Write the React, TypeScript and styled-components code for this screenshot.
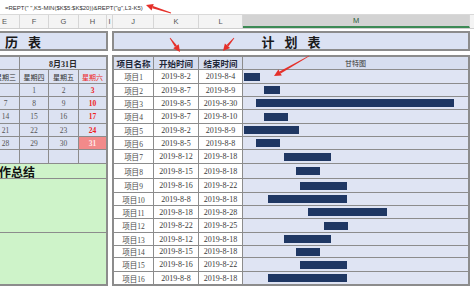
import React from "react";
import styled, { createGlobalStyle } from "styled-components";

const GlobalStyle = createGlobalStyle`
  html, body { margin: 0; padding: 0; background: #ffffff; }
  body { overflow: hidden; font-family: "Liberation Serif", "Noto Sans CJK SC", serif; }
`;

const LINE = "#8c8c8c";
const BLUE = "#dce2f2";
const GANTT = "#dfe4f3";
const HEAD = "#d7deef";
const GREEN = "#cef3c9";
const RED = "#ee1f1f";
const NAVY = "#1f3763";

const COLS = [
  { name: "E", w: 30 },
  { name: "F", w: 29 },
  { name: "G", w: 30 },
  { name: "H", w: 28 },
  { name: "I", w: 6 },
  { name: "J", w: 41 },
  { name: "K", w: 45 },
  { name: "L", w: 44 },
  { name: "M", w: 227 },
  { name: "N", w: 40 },
];

const ROWS = [14, 13, 13, 14, 13, 13, 14, 15, 14, 13, 13, 14, 13, 12, 14, 12];

const PROJECTS: [number, number][] = [
  [2, 4], [7, 9], [5, 30], [7, 10], [2, 9], [5, 8], [12, 18], [15, 18],
  [16, 22], [8, 18], [18, 28], [22, 25], [12, 18], [15, 18], [16, 22], [8, 18],
];

const WEEKS: string[][] = [
  ["", "1", "2", "3"],
  ["7", "8", "9", "10"],
  ["14", "15", "16", "17"],
  ["21", "22", "23", "24"],
  ["28", "29", "30", "31"],
  ["", "", "", ""],
];

const Page = styled.div`
  position: relative;
  width: 474px;
  height: 290px;
  overflow: hidden;
  background: #fff;
`;

const FormulaBar = styled.div`
  height: 15px;
  box-sizing: border-box;
  border-bottom: 1px solid #d9d9d9;
  display: flex;
  align-items: center;
  padding: 2px 0 0 5px;
  font-family: "Liberation Sans", Arial, sans-serif;
  font-size: 6px;
  color: #333;
  white-space: pre;
`;

const ColHeaderRow = styled.div`
  display: grid;
  grid-template-columns: ${COLS.map((c) => c.w + "px").join(" ")};
  height: 14px;
  margin-left: -10px;
  box-sizing: border-box;
  background: #f4f4f4;
  border-bottom: 1px solid #cfcfcf;
`;

const ColLetter = styled.div<{ $active?: boolean }>`
  display: flex;
  align-items: center;
  justify-content: center;
  box-sizing: border-box;
  border-right: 1px solid #d6d6d6;
  font-family: "Liberation Sans", Arial, sans-serif;
  font-size: 7.5px;
  color: ${(p) => (p.$active ? "#2c5d38" : "#555")};
  background: ${(p) => (p.$active ? "#d3d3d3" : "transparent")};
  border-bottom: ${(p) => (p.$active ? "2px solid #3d8a55" : "none")};
`;

const Body = styled.div`
  display: flex;
  align-items: flex-start;
  gap: 4px;
  margin-left: -10px;
  padding-top: 2px;
`;

const Panel = styled.section<{ $w: number }>`
  width: ${(p) => p.$w}px;
  display: flex;
  flex-direction: column;
  gap: 4px;
`;

const TitleBox = styled.div<{ $center?: boolean }>`
  height: 20px;
  box-sizing: border-box;
  border: 2px solid ${LINE};
  background: #dbe2f3;
  display: flex;
  align-items: center;
  justify-content: ${(p) => (p.$center ? "center" : "flex-start")};
  padding-left: ${(p) => (p.$center ? 0 : 13)}px;
  padding-top: 1px;
  gap: 10px;
`;

const TitleChar = styled.span`
  font-family: "Noto Sans CJK SC", sans-serif;
  font-weight: 700;
  font-size: 13px;
  line-height: 1;
  color: #1a1a1a;
`;

const Table = styled.div`
  border: 2px solid ${LINE};
  display: flex;
  flex-direction: column;
  background: #fff;
`;

const Row = styled.div<{ $h: number; $cols: string }>`
  display: grid;
  grid-template-columns: ${(p) => p.$cols};
  height: ${(p) => p.$h}px;
  box-sizing: border-box;
  border-bottom: 1px solid ${LINE};
  &:last-child {
    border-bottom: none;
  }
`;

const Cell = styled.div<{ $bg?: string }>`
  display: flex;
  align-items: center;
  justify-content: center;
  box-sizing: border-box;
  border-right: 1px solid ${LINE};
  overflow: hidden;
  white-space: nowrap;
  background: ${(p) => p.$bg ?? "#fff"};
  &:last-child {
    border-right: none;
  }
`;

const MonthCell = styled(Cell)`
  grid-column: 2 / -1;
  font-family: "Liberation Serif", "Noto Sans CJK SC", serif;
  font-weight: 700;
  font-size: 8px;
  color: #2a2a2a;
`;

const WeekdayCell = styled(Cell)<{ $sat?: boolean }>`
  font-family: "Noto Sans CJK SC", sans-serif;
  font-size: 7px;
  color: ${(p) => (p.$sat ? RED : "#333")};
`;

const DayCell = styled(Cell)<{ $sat?: boolean; $today?: boolean }>`
  font-family: "Liberation Serif", serif;
  font-size: 7.5px;
  font-weight: ${(p) => (p.$sat ? 700 : 400)};
  color: ${(p) => (p.$today ? "#ffe9e9" : p.$sat ? RED : "#555")};
`;

const NoteTitle = styled(Cell)`
  grid-column: 1 / -1;
  justify-content: flex-start;
  padding-left: 7px;
  font-family: "Noto Sans CJK SC", sans-serif;
  font-weight: 700;
  font-size: 12px;
  color: #111;
`;

const NoteBlock = styled(Cell)`
  grid-column: 1 / -1;
`;

const ProjHead = styled(Cell)`
  font-family: "Noto Sans CJK SC", sans-serif;
  font-weight: 700;
  font-size: 8.5px;
  color: #1f2738;
`;

const GanttHead = styled(Cell)`
  font-family: "Noto Sans CJK SC", sans-serif;
  font-size: 7px;
  color: #333;
`;

const NameCell = styled(Cell)`
  font-family: "Liberation Serif", "Noto Sans CJK SC", serif;
  font-size: 7.5px;
  color: #4a4a4a;
`;

const DateCell = styled(Cell)`
  font-family: "Liberation Serif", serif;
  font-size: 8px;
  color: #3a3a3a;
`;

const GanttCell = styled(Cell)`
  justify-content: flex-start;
  background: ${GANTT};
`;

const Bar = styled.div`
  height: 8px;
  background: ${NAVY};
  flex: none;
`;

const Overlay = styled.svg`
  position: absolute;
  left: 0;
  top: 0;
  pointer-events: none;
`;

function Arrow({ x1, y1, x2, y2 }: { x1: number; y1: number; x2: number; y2: number }) {
  const dx = x2 - x1;
  const dy = y2 - y1;
  const len = Math.hypot(dx, dy);
  const ux = dx / len;
  const uy = dy / len;
  const nx = -uy;
  const ny = ux;
  const hl = 7;
  const hw = 3.4;
  const bx = x2 - ux * hl;
  const by = y2 - uy * hl;
  const tw = 0.4;
  const sw = 1.2;
  const shaft = [
    [x1 + nx * tw, y1 + ny * tw],
    [bx + nx * sw, by + ny * sw],
    [bx - nx * sw, by - ny * sw],
    [x1 - nx * tw, y1 - ny * tw],
  ];
  const head = [
    [x2, y2],
    [bx + nx * hw, by + ny * hw],
    [bx - nx * hw, by - ny * hw],
  ];
  const pts = (a: number[][]) => a.map((p) => p.map((v) => v.toFixed(1)).join(",")).join(" ");
  return (
    <g fill="#e5302a">
      <polygon points={pts(shaft)} />
      <polygon points={pts(head)} />
    </g>
  );
}

const LEFT_COLS = "28px 29px 30px 1fr";
const RIGHT_COLS = "40px 45px 44px 1fr";

export default function App() {
  const blockA = ROWS.slice(8, 12).reduce((a, b) => a + b, 0);
  const blockB = ROWS.slice(12, 16).reduce((a, b) => a + b, 0);
  return (
    <Page>
      <GlobalStyle />
      <FormulaBar>{'=REPT(" ",K5-MIN($K$5:$K$20))&REPT("g",L3-K5)'}</FormulaBar>
      <ColHeaderRow>
        {COLS.map((c) => (
          <ColLetter key={c.name} $active={c.name === "M"}>
            {c.name === "N" ? "" : c.name}
          </ColLetter>
        ))}
      </ColHeaderRow>
      <Body>
        <Panel $w={118}>
          <TitleBox>
            <TitleChar>历</TitleChar>
            <TitleChar>表</TitleChar>
          </TitleBox>
          <Table>
            <Row $h={13} $cols={LEFT_COLS}>
              <Cell $bg={BLUE} />
              <MonthCell $bg={BLUE}>8月31日</MonthCell>
            </Row>
            <Row $h={ROWS[0]} $cols={LEFT_COLS}>
              {["星期三", "星期四", "星期五", "星期六"].map((d, i) => (
                <WeekdayCell key={d} $bg={BLUE} $sat={i === 3}>
                  {d}
                </WeekdayCell>
              ))}
            </Row>
            {WEEKS.map((week, wi) => (
              <Row key={wi} $h={ROWS[wi + 1]} $cols={LEFT_COLS}>
                {week.map((d, i) => (
                  <DayCell
                    key={i}
                    $bg={d === "31" ? "#f28a8a" : BLUE}
                    $sat={i === 3}
                    $today={d === "31"}
                  >
                    {d}
                  </DayCell>
                ))}
              </Row>
            ))}
            <Row $h={ROWS[7]} $cols={LEFT_COLS}>
              <NoteTitle $bg={GREEN}>作总结</NoteTitle>
            </Row>
            <Row $h={blockA} $cols={LEFT_COLS}>
              <NoteBlock $bg={GREEN} />
            </Row>
            <Row $h={blockB} $cols={LEFT_COLS}>
              <NoteBlock $bg={GREEN} />
            </Row>
          </Table>
        </Panel>
        <Panel $w={358}>
          <TitleBox $center>
            <TitleChar>计</TitleChar>
            <TitleChar>划</TitleChar>
            <TitleChar>表</TitleChar>
          </TitleBox>
          <Table>
            <Row $h={13} $cols={RIGHT_COLS}>
              <ProjHead $bg={HEAD}>项目名称</ProjHead>
              <ProjHead $bg={HEAD}>开始时间</ProjHead>
              <ProjHead $bg={HEAD}>结束时间</ProjHead>
              <GanttHead $bg={HEAD}>甘特图</GanttHead>
            </Row>
            {PROJECTS.map(([s, e], i) => (
              <Row key={i} $h={ROWS[i]} $cols={RIGHT_COLS}>
                <NameCell>项目{i + 1}</NameCell>
                <DateCell>2019-8-{s}</DateCell>
                <DateCell>2019-8-{e}</DateCell>
                <GanttCell>
                  <Bar style={{ marginLeft: 1 + (s - 2) * 4, width: (e - s) * 7.9 }} />
                </GanttCell>
              </Row>
            ))}
          </Table>
        </Panel>
      </Body>
      <Overlay width={474} height={290} viewBox="0 0 474 290">
        <Arrow x1={171} y1={13} x2={146} y2={5} />
        <Arrow x1={170} y1={38} x2={180} y2={52} />
        <Arrow x1={234} y1={38} x2={223} y2={51} />
        <Arrow x1={309} y1={56} x2={274} y2={76} />
      </Overlay>
    </Page>
  );
}
